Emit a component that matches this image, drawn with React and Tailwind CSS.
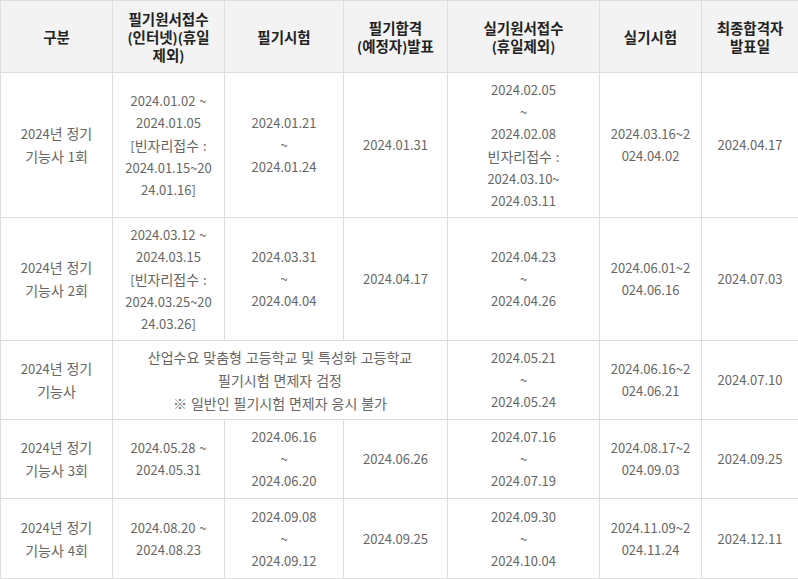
import React from "react";

const rows = [
  {
    h: "h-[145px]",
    cells: [
      ["2024년 정기", "기능사 1회"],
      ["2024.01.02 ~", "2024.01.05", "[빈자리접수 :", "2024.01.15~20", "24.01.16]"],
      ["2024.01.21", "~", "2024.01.24"],
      ["2024.01.31"],
      ["2024.02.05", "~", "2024.02.08", "빈자리접수 :", "2024.03.10~", "2024.03.11"],
      ["2024.03.16~2", "024.04.02"],
      ["2024.04.17"],
    ],
  },
  {
    h: "h-[123px]",
    cells: [
      ["2024년 정기", "기능사 2회"],
      ["2024.03.12 ~", "2024.03.15", "[빈자리접수 :", "2024.03.25~20", "24.03.26]"],
      ["2024.03.31", "~", "2024.04.04"],
      ["2024.04.17"],
      ["2024.04.23", "~", "2024.04.26"],
      ["2024.06.01~2", "024.06.16"],
      ["2024.07.03"],
    ],
  },
  {
    h: "h-[79px]",
    special: true,
    cells: [
      ["2024년 정기", "기능사"],
      ["산업수요 맞춤형 고등학교 및 특성화 고등학교", "필기시험 면제자 검정", "※ 일반인 필기시험 면제자 응시 불가"],
      ["2024.05.21", "~", "2024.05.24"],
      ["2024.06.16~2", "024.06.21"],
      ["2024.07.10"],
    ],
  },
  {
    h: "h-[79px]",
    cells: [
      ["2024년 정기", "기능사 3회"],
      ["2024.05.28 ~", "2024.05.31"],
      ["2024.06.16", "~", "2024.06.20"],
      ["2024.06.26"],
      ["2024.07.16", "~", "2024.07.19"],
      ["2024.08.17~2", "024.09.03"],
      ["2024.09.25"],
    ],
  },
  {
    h: "h-[80px]",
    cells: [
      ["2024년 정기", "기능사 4회"],
      ["2024.08.20 ~", "2024.08.23"],
      ["2024.09.08", "~", "2024.09.12"],
      ["2024.09.25"],
      ["2024.09.30", "~", "2024.10.04"],
      ["2024.11.09~2", "024.11.24"],
      ["2024.12.11"],
    ],
  },
];

const headers = [
  ["구분"],
  ["필기원서접수", "(인터넷)(휴일", "제외)"],
  ["필기시험"],
  ["필기합격", "(예정자)발표"],
  ["실기원서접수", "(휴일제외)"],
  ["실기시험"],
  ["최종합격자", "발표일"],
];

function Mixed({ text, head }) {
  const parts = text.split(/([\uAC00-\uD7A3\u203B]+)/);
  return parts.map((p, i) =>
    /[\uAC00-\uD7A3\u203B]/.test(p) ? (
      <span key={i} className={head ? "text-[14.5px]" : "text-[14px]"}>
        {p}
      </span>
    ) : p.length ? (
      <span key={i} className="[word-spacing:1px]">
        {p}
      </span>
    ) : null
  );
}

function Lines({ lines, head }) {
  return lines.map((l, i) => (
    <div key={i} className="whitespace-nowrap">
      <Mixed text={l} head={head} />
    </div>
  ));
}

export default function App() {
  return (
    <div
      className="w-[798px] h-[579px] bg-white"
      style={{ fontFamily: '"Noto Sans CJK KR", "Noto Sans", sans-serif' }}
    >
      <table className="w-[798px] table-fixed border-collapse">
        <colgroup>
          <col className="w-[112px]" />
          <col className="w-[112px]" />
          <col className="w-[119px]" />
          <col className="w-[104px]" />
          <col className="w-[152px]" />
          <col className="w-[102px]" />
          <col className="w-[97px]" />
        </colgroup>
        <thead>
          <tr>
            {headers.map((h, i) => (
              <th
                key={i}
                className="h-[72px] border border-[#dddddd] bg-[#f3f3f3] p-0 text-center align-middle text-[13.5px] font-bold leading-[17px] text-[#222222]"
              >
                <Lines lines={h} head />
              </th>
            ))}
          </tr>
        </thead>
        <tbody>
          {rows.map((r, ri) => (
            <tr key={ri}>
              {r.cells.map((c, ci) => (
                <td
                  key={ci}
                  colSpan={r.special && ci === 1 ? 3 : 1}
                  className={`${r.h} border border-[#dddddd] p-0 text-center align-middle text-[13px] leading-[22px] text-[#666666]`}
                >
                  <Lines lines={c} />
                </td>
              ))}
            </tr>
          ))}
        </tbody>
      </table>
    </div>
  );
}
